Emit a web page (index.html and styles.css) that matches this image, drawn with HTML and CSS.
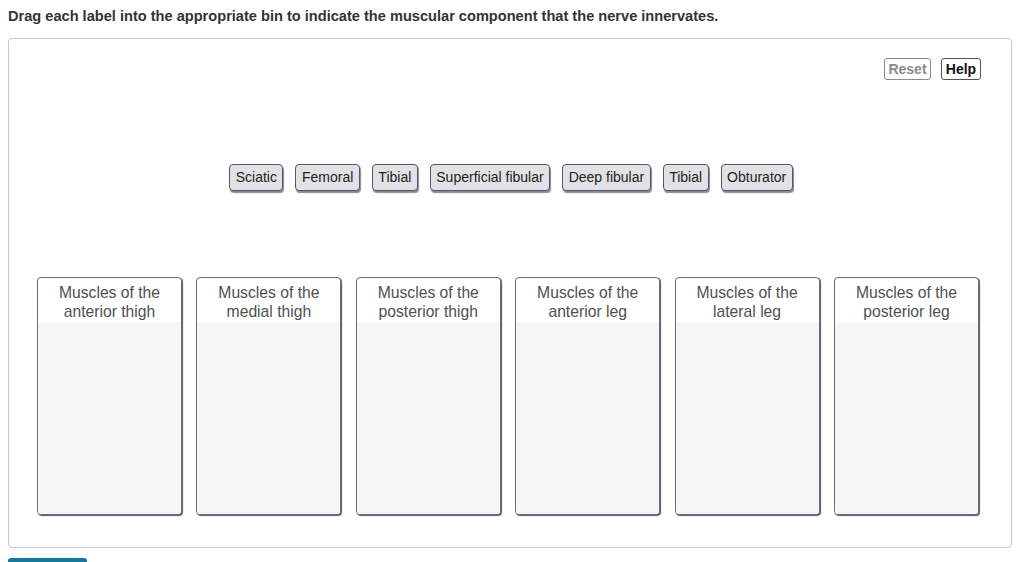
FILE: index.html
```html
<!DOCTYPE html>
<html>
<head>
<meta charset="utf-8">
<link rel="stylesheet" href="styles.css">
</head>
<body>
<p class="prompt">Drag each label into the appropriate bin to indicate the muscular component that the nerve innervates.</p>
<div class="panel">
  <div class="toolbar">
    <button class="tbtn reset">Reset</button>
    <button class="tbtn help">Help</button>
  </div>
  <div class="labels">
    <div class="label">Sciatic</div>
    <div class="label">Femoral</div>
    <div class="label">Tibial</div>
    <div class="label">Superficial fibular</div>
    <div class="label">Deep fibular</div>
    <div class="label">Tibial</div>
    <div class="label">Obturator</div>
  </div>
  <div class="bins">
    <div class="bin"><div class="bin-head">Muscles of the<br>anterior thigh</div><div class="bin-body"></div></div>
    <div class="bin"><div class="bin-head">Muscles of the<br>medial thigh</div><div class="bin-body"></div></div>
    <div class="bin"><div class="bin-head">Muscles of the<br>posterior thigh</div><div class="bin-body"></div></div>
    <div class="bin"><div class="bin-head">Muscles of the<br>anterior leg</div><div class="bin-body"></div></div>
    <div class="bin"><div class="bin-head">Muscles of the<br>lateral leg</div><div class="bin-body"></div></div>
    <div class="bin"><div class="bin-head">Muscles of the<br>posterior leg</div><div class="bin-body"></div></div>
  </div>
</div>
<div class="submit"></div>
</body>
</html>
```
FILE: styles.css
```css
html, body {
  margin: 0;
  padding: 0;
  background: #fff;
}
body {
  padding: 8px;
  font-family: "Liberation Sans", Arial, Helvetica, sans-serif;
  color: #333;
  overflow: hidden;
}
.prompt {
  margin: 0;
  font-size: 14.6px;
  font-weight: bold;
  line-height: 17px;
  color: #333;
}
.panel {
  margin-top: 13px;
  width: 1004px;
  height: 510px;
  box-sizing: border-box;
  border: 1px solid #c8c8c8;
  border-radius: 4px;
  padding-top: 19px;
}
.toolbar {
  display: flex;
  justify-content: flex-end;
  gap: 10px;
  padding-right: 30px;
  height: 22px;
}
.tbtn {
  height: 22px;
  box-sizing: border-box;
  background: #fff;
  border: 1px solid #8c8c8c;
  border-radius: 3px;
  font-family: "Liberation Sans", Arial, Helvetica, sans-serif;
  font-size: 14px;
  font-weight: bold;
  padding: 0 3px;
  margin: 0;
}
.reset { color: #8a8a8a; width: 47px; }
.help { color: #111; width: 40px; border-color: #555; }
.labels {
  display: flex;
  justify-content: center;
  gap: 12px;
  margin-top: 84px;
  padding-left: 2px;
}
.label {
  height: 27px;
  box-sizing: border-box;
  line-height: 25px;
  padding: 0 5.5px;
  font-size: 14px;
  color: #222;
  background: #e2e2e4;
  border: 1px solid #55556a;
  border-radius: 4px;
  box-shadow: 1px 2px 1px #8a8a96;
}
.bins {
  display: flex;
  gap: 14.4px;
  margin-top: 86px;
  padding-left: 28px;
}
.bin {
  width: 145px;
  height: 238px;
  box-sizing: border-box;
  border: 1px solid #6a6a7c;
  border-radius: 4px;
  box-shadow: 1px 1px 1px #55556a;
  display: flex;
  flex-direction: column;
  overflow: hidden;
  background: #fff;
}
.bin-head {
  height: 44px;
  flex: none;
  text-align: center;
  font-size: 15.7px;
  line-height: 19px;
  color: #505050;
  padding-top: 5px;
  box-sizing: border-box;
}
.bin-body {
  flex: 1;
  background: #f6f6f6;
}
.submit {
  margin-top: 10px;
  width: 79px;
  height: 10px;
  background: #17799a;
  border-radius: 3px 3px 0 0;
}
```
